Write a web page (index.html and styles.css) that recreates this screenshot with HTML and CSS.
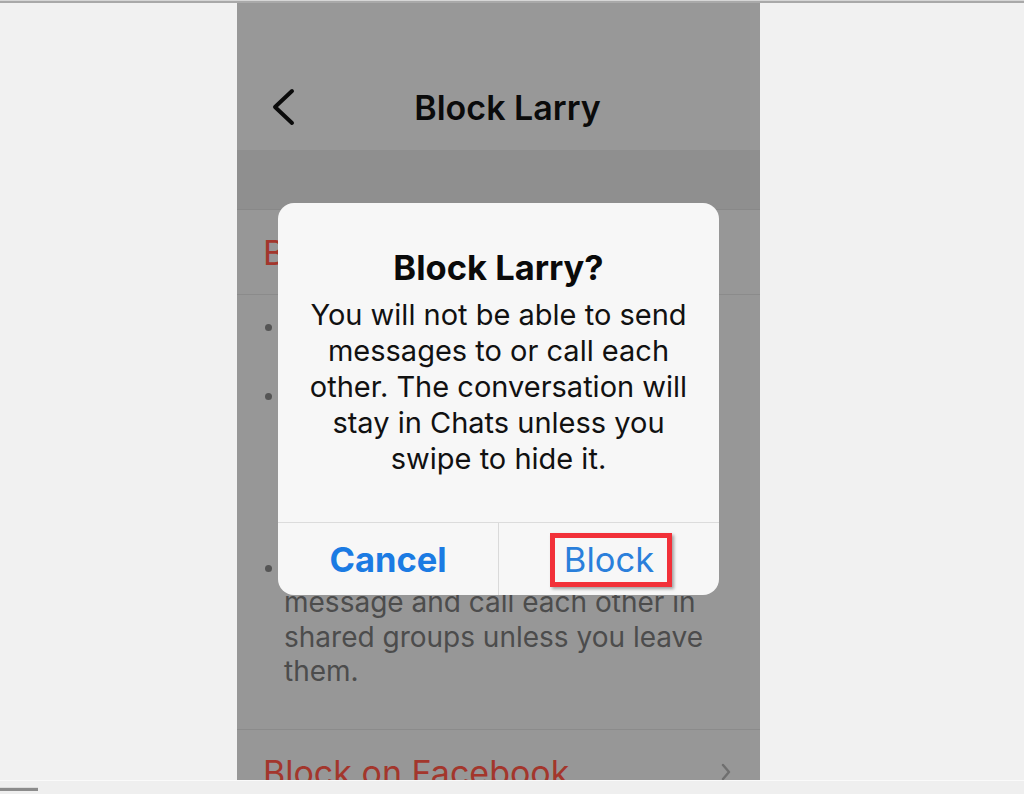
FILE: index.html
```html
<!DOCTYPE html>
<html lang="en">
<head>
    <meta charset="UTF-8">
    <meta name="viewport" content="width=device-width, initial-scale=1.0">
    <title>Block Larry</title>
    <link rel="stylesheet" href="styles.css">
</head>
<body>
    <div id="window">
        <div class="topline"></div>
        <div class="stage">
            <div class="phone">
                <header class="nav">
                    <svg class="back" width="24" height="40" viewBox="0 0 24 40">
                        <polyline points="20,3 3,19 20,35" fill="none" stroke="#0b0b0b" stroke-width="4" stroke-linecap="round" stroke-linejoin="round"/>
                    </svg>
                    <h1>Block Larry</h1>
                </header>
                <div class="gap"></div>
                <div class="row">
                    <span>Block Larry</span>
                </div>
                <ul class="notes">
                    <li>Larry won't be able to message<br>or call you.</li>
                    <li>Larry will still be able to<br>see your profile and posts<br>on Facebook unless you<br>block them there, and they<br>won't be notified.</li>
                    <li>You'll still be able to<br>message and call each other in<br>shared groups unless you leave<br>them.</li>
                </ul>
                <div class="row">
                    <span>Block on Facebook</span>
                    <svg class="chevron" width="10" height="18" viewBox="0 0 10 18">
                        <polyline points="2,2 8,9 2,16" fill="none" stroke="#6f6f6f" stroke-width="2.4" stroke-linecap="round" stroke-linejoin="round"/>
                    </svg>
                </div>

                <!-- alert sits over the dimmed screen -->
                <div class="alert">
                    <h2>Block Larry?</h2>
                    <p>You will not be able to send<br>messages to or call each<br>other. The conversation will<br>stay in Chats unless you<br>swipe to hide it.</p>
                    <div class="actions">
                        <button class="cancel">Cancel</button>
                        <button class="confirm">Block<span class="mark"></span></button>
                    </div>
                </div>
            </div>
        </div>
        <div class="statusbar">
            <div class="thumb"></div>
        </div>
    </div>
</body>
</html>
```

FILE: styles.css
```css
body {
    margin: 0;
    padding: 0;
    background: #f1f1f1;
    font-family: Inter, "Liberation Sans", Arial, sans-serif;
}

#window {
    width: 1024px;
    height: 794px;
    display: flex;
    flex-direction: column;
    overflow: hidden;
}

.topline {
    flex: none;
    height: 2px;
    border-top: 1px solid #d6d6d6;
    background: #a9a9a9;
}

.stage {
    flex: 1;
    min-height: 0;
    padding-left: 237px;
    overflow: hidden;
}

.phone {
    position: relative;
    width: 523px;
    height: 100%;
    background: #979797;
    display: flex;
    flex-direction: column;
    overflow: hidden;
}

.nav {
    flex: none;
    height: 147px;
    box-sizing: border-box;
    padding: 0 41px 22px 35px;
    display: flex;
    align-items: flex-end;
    background: #989898;
}

.nav .back {
    flex: none;
    display: block;
}

.nav h1 {
    flex: 1;
    margin: 0;
    text-align: center;
    font-size: 34px;
    font-weight: 600;
    line-height: 40px;
    color: #0b0b0b;
}

.gap {
    flex: none;
    height: 59px;
    background: #8f8f8f;
    border-bottom: 1px solid #888888;
}

.row {
    flex: none;
    height: 85px;
    box-sizing: border-box;
    padding: 0 29px 0 26px;
    display: flex;
    align-items: center;
    justify-content: space-between;
    background: #979797;
    border-bottom: 1px solid #8b8b8b;
    font-size: 34px;
    color: #a3362c;
}

.row:last-child {
    border-bottom: none;
}

.notes {
    flex: none;
    height: 435px;
    box-sizing: border-box;
    margin: 0;
    padding: 15px 20px 0 28px;
    list-style: none;
    border-bottom: 1px solid #8b8b8b;
    font-size: 28px;
    line-height: 34.4px;
    color: #4c4c4c;
}

.notes li {
    display: flex;
    align-items: flex-start;
    white-space: nowrap;
}

.notes li::before {
    content: "";
    flex: none;
    width: 7px;
    height: 7px;
    margin: 13.7px 12px 0 0;
    border-radius: 50%;
    background: #555555;
}

.alert {
    position: absolute;
    top: 200px;
    left: 41px;
    width: 441px;
    height: 392px;
    border-radius: 16px;
    background: #f7f7f7;
    text-align: center;
    display: flex;
    flex-direction: column;
}

.alert h2 {
    margin: 45px 0 0;
    font-size: 34.5px;
    font-weight: 700;
    line-height: 40px;
    color: #0a0a0a;
}

.alert p {
    margin: 9px 0 0;
    padding-bottom: 45px;
    font-size: 29px;
    line-height: 36px;
    color: #111111;
    border-bottom: 1px solid #dcdcdc;
}

.actions {
    flex: 1;
    display: flex;
}

.actions button {
    flex: 1;
    position: relative;
    border: none;
    background: none;
    padding: 0;
    font-family: inherit;
    font-size: 34.5px;
    color: #1b7be3;
}

.actions .cancel {
    font-weight: 700;
}

.actions .confirm {
    border-left: 1px solid #dadada;
    color: #2a7fdb;
}

.mark {
    position: absolute;
    top: 10px;
    left: 51px;
    width: 122px;
    height: 54px;
    box-sizing: border-box;
    border: 5px solid #f23139;
    box-shadow: 2px 2px 3px rgba(0, 0, 0, 0.35);
}

.statusbar {
    flex: none;
    height: 14px;
    box-sizing: border-box;
    border-top: 1px solid #fafafa;
    background: #efefef;
}

.thumb {
    width: 38px;
    height: 3px;
    margin-top: 6px;
    border-top: 1px solid #dddddd;
    background: #8c8c8c;
}
```
